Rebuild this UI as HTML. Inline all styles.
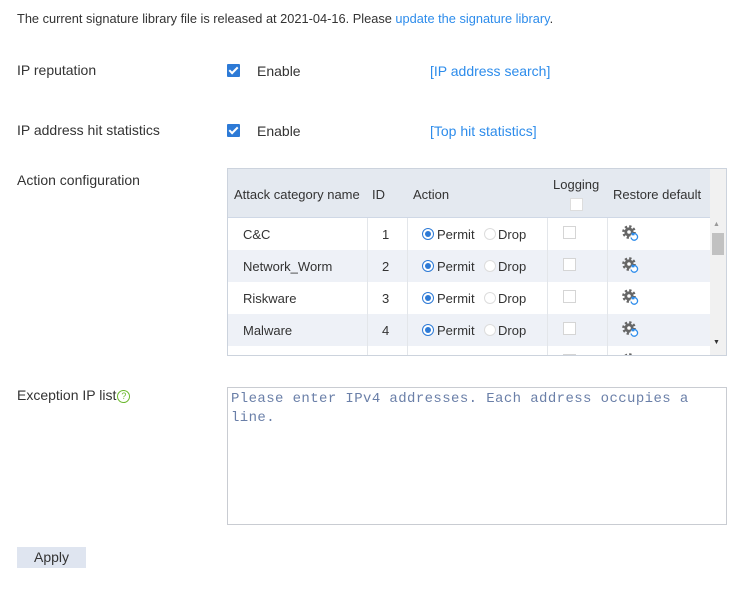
<!DOCTYPE html>
<html><head><style>
body{margin:0;width:750px;height:591px;background:#fff;font-family:"Liberation Sans",sans-serif;color:#333;position:relative;overflow:hidden}
.a{position:absolute;white-space:nowrap}
.lbl{font-size:14px;color:#333}
.lnk{color:#2d8ceb;font-size:14px}
.cb{position:absolute;width:13px;height:13px;background:#2d7ad6;border-radius:1px}
.cb:after{content:"";position:absolute;left:4px;top:1px;width:3px;height:7px;border:solid #fff;border-width:0 2px 2px 0;transform:rotate(45deg)}
.tbl{position:absolute;left:227px;top:168px;width:498px;height:186px;border:1px solid #ccd3dd;overflow:hidden;font-size:13px}
.hd{position:absolute;left:0;top:0;width:482px;height:48px;background:#e4e9f0;border-bottom:1px solid #cfd8e6}
.row{position:absolute;left:0;width:482px;height:32px}
.vl{position:absolute;top:49px;width:1px;height:140px;background:#e3e6ea}
.rd{position:absolute;width:12px;height:12px;border-radius:50%;border:1px solid #ddd;background:#fff;box-sizing:border-box}
.rd.on{border:1px solid #2d7ad6}
.rd.on:after{content:"";position:absolute;left:2px;top:2px;width:6px;height:6px;border-radius:50%;background:#2d7ad6}
.sq{position:absolute;width:13px;height:13px;border:1px solid #d5d5d5;background:#fff;box-sizing:border-box}
</style></head><body>
<div class="a" style="left:17px;top:11px;font-size:12.8px">The current signature library file is released at 2021-04-16. Please <span style="color:#2d8ceb">update the signature library</span>.</div>
<div class="a lbl" style="left:17px;top:62px">IP reputation</div>
<div class="cb" style="left:227px;top:64px"></div>
<div class="a lbl" style="left:257px;top:63px">Enable</div>
<div class="a lnk" style="left:430px;top:63px">[IP address search]</div>
<div class="a lbl" style="left:17px;top:122px">IP address hit statistics</div>
<div class="cb" style="left:227px;top:124px"></div>
<div class="a lbl" style="left:257px;top:123px">Enable</div>
<div class="a lnk" style="left:430px;top:123px">[Top hit statistics]</div>
<div class="a lbl" style="left:17px;top:172px">Action configuration</div>

<div class="tbl">
<div class="hd">
<div class="a" style="left:6px;top:18px">Attack category name</div>
<div class="a" style="left:144px;top:18px">ID</div>
<div class="a" style="left:185px;top:18px">Action</div>
<div class="a" style="left:325px;top:8px">Logging</div>
<div class="sq" style="left:342px;top:29px;border-color:#ddd"></div>
<div class="a" style="left:385px;top:18px">Restore default</div>
</div>
<div style="position:absolute;left:482px;top:0;width:16px;height:186px;background:#f1f1f1"></div>
<div style="position:absolute;left:484px;top:64px;width:12px;height:22px;background:#c1c1c1"></div>
<div class="a" style="left:485px;top:52px;font-size:7px;color:#999">▲</div>
<div class="a" style="left:485px;top:170px;font-size:7px;color:#333">▼</div>
<div class="row" style="top:49px;background:#fff"></div>
<div class="row" style="top:81px;background:#eef1f7"></div>
<div class="row" style="top:113px;background:#fff"></div>
<div class="row" style="top:145px;background:#eef1f7"></div>
<div class="row" style="top:177px;background:#fff"></div>
<div class="vl" style="left:139px"></div><div class="vl" style="left:179px"></div><div class="vl" style="left:319px"></div><div class="vl" style="left:379px"></div>
<div class="a" style="left:15px;top:58px">C&amp;C</div>
<div class="a" style="left:15px;top:90px">Network_Worm</div>
<div class="a" style="left:15px;top:122px">Riskware</div>
<div class="a" style="left:15px;top:154px">Malware</div>
<div class="a" style="left:154px;top:58px">1</div><div class="a" style="left:154px;top:90px">2</div><div class="a" style="left:154px;top:122px">3</div><div class="a" style="left:154px;top:154px">4</div>
<div class="rd on" style="left:194px;top:59px"></div><div class="a" style="left:209px;top:58px">Permit</div><div class="rd" style="left:256px;top:59px"></div><div class="a" style="left:270px;top:58px">Drop</div>
<div class="rd on" style="left:194px;top:91px"></div><div class="a" style="left:209px;top:90px">Permit</div><div class="rd" style="left:256px;top:91px"></div><div class="a" style="left:270px;top:90px">Drop</div>
<div class="rd on" style="left:194px;top:123px"></div><div class="a" style="left:209px;top:122px">Permit</div><div class="rd" style="left:256px;top:123px"></div><div class="a" style="left:270px;top:122px">Drop</div>
<div class="rd on" style="left:194px;top:155px"></div><div class="a" style="left:209px;top:154px">Permit</div><div class="rd" style="left:256px;top:155px"></div><div class="a" style="left:270px;top:154px">Drop</div>
<div class="sq" style="left:335px;top:57px"></div><div class="sq" style="left:335px;top:89px"></div><div class="sq" style="left:335px;top:121px"></div><div class="sq" style="left:335px;top:153px"></div><div class="sq" style="left:335px;top:185px"></div>
<svg style="position:absolute;left:394px;top:56px" width="18" height="150" viewBox="0 0 18 150">
<defs><g id="g"><circle cx="7" cy="7" r="5.6" fill="none" stroke="#666" stroke-width="2.4" stroke-dasharray="2.3 2.1"/><circle cx="7" cy="7" r="4.6" fill="#666"/><circle cx="7" cy="7" r="1.8" fill="#fff"/><circle cx="12" cy="12" r="3.8" fill="#fff"/><path d="M9 12.5a3.3 3.3 0 1 0 1.2-3.2M10.2 7.5v2.2h2.2" fill="none" stroke="#2d8ceb" stroke-width="1.3"/></g></defs>
<use href="#g"/><use href="#g" y="32"/><use href="#g" y="64"/><use href="#g" y="96"/><use href="#g" y="128"/>
</svg>
</div>

<div class="a lbl" style="left:17px;top:387px">Exception IP list<span style="display:inline-block;width:11px;height:11px;border:1px solid #6bb82e;border-radius:50%;color:#6bb82e;font-size:9px;line-height:11px;text-align:center;margin-left:1px;vertical-align:1px">?</span></div>
<div style="position:absolute;left:227px;top:387px;width:498px;height:136px;border:1px solid #c9ccd2"></div>
<div class="a" style="left:231px;top:390px;font-family:'Liberation Mono',monospace;font-size:14px;color:#6a7fa8;letter-spacing:0.4px;line-height:19px;white-space:normal;width:490px">Please enter IPv4 addresses. Each address occupies a line.</div>
<div class="a" style="left:17px;top:547px;width:69px;height:21px;background:#dfe5f0;font-size:14px;text-align:center;line-height:21px">Apply</div>
</body></html>
